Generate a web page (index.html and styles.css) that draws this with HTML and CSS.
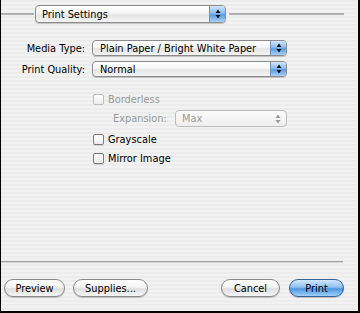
FILE: index.html
```html
<!DOCTYPE html>
<html>
<head>
<meta charset="utf-8">
<link rel="stylesheet" href="styles.css">
</head>
<body>
<div class="window">
  <div class="header">
    <span class="rule rule-left"></span>
    <div class="popup popup-head">
      <span class="popup-text">Print Settings</span>
      <span class="arrows"><svg width="6" height="10" viewBox="0 0 6 10"><path d="M3 0.5 L5.5 4 L0.5 4 Z M3 9.5 L5.5 6 L0.5 6 Z" fill="#111"/></svg></span>
    </div>
    <span class="rule rule-right"></span>
  </div>

  <div class="form">
    <label class="label">Media Type:</label>
    <div class="popup popup-field">
      <span class="popup-text">Plain Paper / Bright White Paper</span>
      <span class="arrows"><svg width="6" height="10" viewBox="0 0 6 10"><path d="M3 0.5 L5.5 4 L0.5 4 Z M3 9.5 L5.5 6 L0.5 6 Z" fill="#111"/></svg></span>
    </div>
    <label class="label">Print Quality:</label>
    <div class="popup popup-field">
      <span class="popup-text">Normal</span>
      <span class="arrows"><svg width="6" height="10" viewBox="0 0 6 10"><path d="M3 0.5 L5.5 4 L0.5 4 Z M3 9.5 L5.5 6 L0.5 6 Z" fill="#111"/></svg></span>
    </div>
  </div>

  <div class="options">
    <div class="check disabled"><span class="box"></span><span>Borderless</span></div>
    <div class="expansion">
      <span class="exp-label">Expansion:</span>
      <div class="popup popup-disabled">
        <span class="popup-text">Max</span>
        <span class="arrows"><svg width="6" height="10" viewBox="0 0 6 10"><path d="M3 0.5 L5.5 4 L0.5 4 Z M3 9.5 L5.5 6 L0.5 6 Z" fill="#9a9a9a"/></svg></span>
      </div>
    </div>
    <div class="check check-gray"><span class="box"></span><span>Grayscale</span></div>
    <div class="check check-mirror"><span class="box"></span><span>Mirror Image</span></div>
  </div>

  <div class="spacer"></div>
  <div class="bottom-rule"></div>

  <div class="buttons">
    <button class="btn btn-preview">Preview</button>
    <button class="btn btn-supplies">Supplies...</button>
    <span class="grow"></span>
    <button class="btn btn-cancel">Cancel</button>
    <button class="btn btn-print">Print</button>
  </div>
</div>
</body>
</html>
```
FILE: styles.css
```css
* { box-sizing: border-box; }
html, body { margin: 0; padding: 0; }
body {
  font-family: "DejaVu Sans", "Liberation Sans", sans-serif;
  font-size: 9.8px;
  color: #000;
  background: #fff;
}
.window {
  width: 360px;
  height: 313px;
  border-left: 1px solid #000;
  border-right: 2px solid #000;
  border-bottom: 2px solid #000;
  background: repeating-linear-gradient(to bottom, #ececec 0px, #ececec 2px, #f2f2f2 2px, #f2f2f2 4px);
  display: flex;
  flex-direction: column;
}
.header {
  display: flex;
  align-items: center;
  padding-top: 5px;
  height: 23px;
}
.rule {
  height: 2px;
  background: #b0b0b0;
  display: block;
}
.rule-left { width: 33px; }
.rule-right { width: 115px; margin-left: 3px; }
.popup {
  display: flex;
  align-items: center;
  border: 1px solid #8c8c8c;
  border-radius: 4px;
  background: linear-gradient(to bottom, #ffffff 0%, #f6f6f6 45%, #e4e4e4 55%, #f4f4f4 100%);
  box-shadow: 0 1px 0 rgba(0,0,0,0.18);
  overflow: hidden;
}
.popup-text {
  flex: 1;
  white-space: nowrap;
  overflow: hidden;
}
.arrows {
  width: 16px;
  align-self: stretch;
  display: flex;
  align-items: center;
  justify-content: center;
  background: linear-gradient(to bottom, #d2e6fb 0%, #8bbdef 45%, #5b9ce3 55%, #a9d1f7 100%);
  border-left: 1px solid #6f8fb8;
}
.popup-head {
  width: 191px;
  height: 18px;
  margin-left: 1px;
}
.popup-head .popup-text { padding-left: 6px; }
.form {
  display: grid;
  grid-template-columns: 84px 195px;
  column-gap: 7px;
  row-gap: 5px;
  margin-top: 17px;
  align-items: center;
}
.label {
  text-align: right;
  white-space: nowrap;
}
.popup-field {
  height: 16px;
}
.popup-field .popup-text { padding-left: 7px; }
.options {
  margin-top: 16px;
  padding-left: 92px;
  display: flex;
  flex-direction: column;
}
.check {
  display: flex;
  align-items: center;
  gap: 4px;
  height: 12px;
}
.box {
  width: 11px;
  height: 11px;
  border: 1px solid #7c7c7c;
  border-radius: 2px;
  background: linear-gradient(to bottom, #ffffff, #ececec);
  box-shadow: 0 1px 0 rgba(0,0,0,0.12);
}
.disabled { color: #9a9a9a; }
.disabled .box { border-color: #bdbdbd; box-shadow: none; }
.expansion {
  display: flex;
  align-items: center;
  margin-top: 5px;
  padding-left: 20px;
  color: #9a9a9a;
}
.exp-label { width: 62px; }
.popup-disabled {
  width: 112px;
  height: 17px;
  border-color: #bcbcbc;
  box-shadow: none;
  background: linear-gradient(to bottom, #fbfbfb, #eeeeee);
}
.popup-disabled .popup-text { padding-left: 6px; }
.popup-disabled .arrows {
  background: transparent;
  border-left: none;
}
.check-gray { margin-top: 6px; }
.check-mirror { margin-top: 7px; }
.spacer { flex: 1; }
.bottom-rule {
  width: 342px;
  height: 2px;
  border-top: 1px solid #a2a2a2;
  border-bottom: 1px solid #d6d6d6;
}
.buttons {
  display: flex;
  align-items: center;
  padding: 16px 14px 14px 3px;
}
.grow { flex: 1; }
.btn {
  font-family: "DejaVu Sans", "Liberation Sans", sans-serif;
  font-size: 9.8px;
  color: #000;
  height: 18px;
  padding: 0;
  border: 1px solid #8a8a8a;
  border-radius: 9px;
  background: linear-gradient(to bottom, #ffffff 0%, #f4f4f4 45%, #dedede 55%, #f6f6f6 100%);
  box-shadow: 0 1px 1px rgba(0,0,0,0.2);
}
.btn-preview { width: 61px; }
.btn-supplies { width: 75px; margin-left: 8px; }
.btn-cancel { width: 59px; }
.btn-print {
  width: 55px;
  margin-left: 9px;
  border-color: #34619c;
  background: linear-gradient(to bottom, #d3e8fc 0%, #8fc1f1 45%, #4f95e0 55%, #9fd0f8 100%);
}
```
